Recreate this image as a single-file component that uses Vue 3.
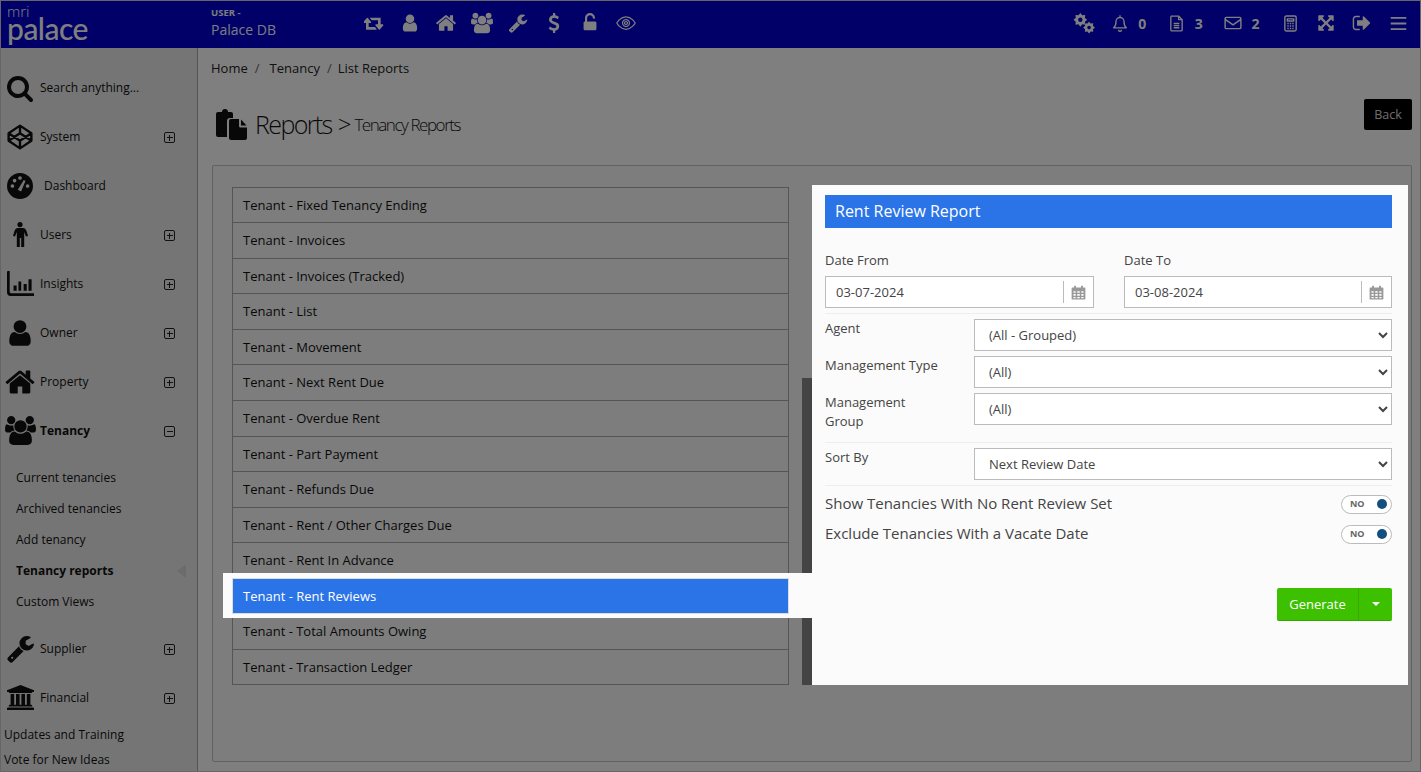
<script setup>
const circle = (cx, cy, r) => `M${cx - r} ${cy}a${r} ${r} 0 1 0 ${r * 2} 0a${r} ${r} 0 1 0 ${-r * 2} 0z`

// gear with a hole in the middle, used twice by the cogs icon
const gear = (cx, cy, r, hole) => {
  let d = ''
  for (let i = 0; i < 16; i++) {
    const a = (i / 16) * Math.PI * 2
    const rad = i % 2 === 0 ? r : r * 0.72
    d += `${i ? 'L' : 'M'}${(cx + rad * Math.cos(a)).toFixed(2)} ${(cy + rad * Math.sin(a)).toFixed(2)}`
  }
  return d + 'z' + circle(cx, cy, hole)
}

const icons = {
  search: { vb: '0 0 1792 1792', d: 'M1216 832q0-185-131.5-316.5t-316.5-131.5-316.5 131.5-131.5 316.5 131.5 316.5 316.5 131.5 316.5-131.5 131.5-316.5zm512 832q0 52-38 90t-90 38q-54 0-90-38l-343-342q-179 124-399 124-143 0-273.5-55.5t-225-150-150-225-55.5-273.5 55.5-273.5 150-225 225-150 273.5-55.5 273.5 55.5 225 150 150 225 55.5 273.5q0 220-124 399l343 343q37 37 37 90z' },
  user: { vb: '0 0 1792 1792', d: 'M1536 1399q0 109-62.5 187t-150.5 78h-854q-88 0-150.5-78t-62.5-187q0-85 8.5-160.5t31.5-152 58.5-131 94-89 134.5-34.5q131 128 313 128t313-128q76 0 134.5 34.5t94 89 58.5 131 31.5 152 8.5 160.5zm-256-887q0 159-112.5 271.5t-271.5 112.5-271.5-112.5-112.5-271.5 112.5-271.5 271.5-112.5 271.5 112.5 112.5 271.5z' },
  home: { vb: '0 0 1792 1792', d: 'M1472 992v480q0 26-19 45t-45 19h-384v-384h-256v384h-384q-26 0-45-19t-19-45v-480q0-1 .5-3t.5-3l575-474 575 474q1 2 1 6zm223-69l-62 74q-8 9-21 11h-3q-13 0-21-7l-692-577-692 577q-12 8-24 7-13-2-21-11l-62-74q-8-10-7-23.5t11-21.5l719-599q32-26 76-26t76 26l244 204v-195q0-14 9-23t23-9h192q14 0 23 9t9 23v408l219 182q10 8 11 21.5t-7 23.5z' },
  users: { vb: '0 0 1920 1792', d: 'M593 896q-162 5-265 128h-134q-82 0-138-40.5t-56-118.5q0-353 124-353 6 0 43.5 21t97.5 42.5 119 21.5q67 0 133-23-5 37-5 66 0 139 81 256zm1071 637q0 120-73 189.5t-194 69.5h-874q-121 0-194-69.5t-73-189.5q0-53 3.5-103.5t14-109 26.5-108.5 43-97.5 62-81 85.5-53.5 111.5-20q10 0 43 21.5t73 48 107 48 135 21.5 135-21.5 107-48 73-48 43-21.5q61 0 111.5 20t85.5 53.5 62 81 43 97.5 26.5 108.5 14 109 3.5 103.5zm-1024-1277q0 106-75 181t-181 75-181-75-75-181 75-181 181-75 181 75 75 181zm704 384q0 159-112.5 271.5t-271.5 112.5-271.5-112.5-112.5-271.5 112.5-271.5 271.5-112.5 271.5 112.5 112.5 271.5zm576 225q0 78-56 118.5t-138 40.5h-134q-103-123-265-128 81-117 81-256 0-29-5-66 66 23 133 23 59 0 119-21.5t97.5-42.5 43.5-21q124 0 124 353zm-128-609q0 106-75 181t-181 75-181-75-75-181 75-181 181-75 181 75 75 181z' },
  wrench: { vb: '0 0 1792 1792', d: 'M448 1472q0-26-19-45t-45-19-45 19-19 45 19 45 45 19 45-19 19-45zm644-420l-682 682q-37 37-90 37-52 0-91-37l-106-108q-38-36-38-90 0-53 38-91l681-681q39 98 114.5 173.5t173.5 114.5zm634-435q0 39-23 106-47 134-164.5 217.5t-258.5 83.5q-185 0-316.5-131.5t-131.5-316.5 131.5-316.5 316.5-131.5q58 0 121.5 16.5t107.5 46.5q16 11 16 28t-16 28l-293 169v224l193 107q5-3 79-48.5t135.5-81 70.5-35.5q15 0 23.5 10t8.5 25z' },
  dollar: { vb: '0 0 1792 1792', d: 'M1362 1185q0 153-99.5 263.5t-258.5 136.5v175q0 14-9 23t-23 9h-135q-13 0-22.5-9.5t-9.5-22.5v-175q-66-9-127.5-31t-101.5-44.5-74-48-46.5-37.5-17.5-18q-17-21-2-41l103-135q7-10 23-12 15-2 24 9l2 2q113 99 243 125 37 8 74 8 81 0 142.5-43t61.5-122q0-28-15-53t-33.5-42-58.5-37.5-66-32-80-32.5q-39-16-61.5-25t-61.5-26.5-62.5-31-56.5-35.5-53.5-42.5-43.5-49-35.5-58-21-66.5-8.5-78q0-138 98-242t255-134v-180q0-13 9.5-22.5t22.5-9.5h135q14 0 23 9t9 23v176q57 6 110.5 23t87 33.5 63.5 37.5 39 29 15 14q17 18 5 38l-81 146q-8 15-23 16-14 3-27-7-3-3-14.5-12t-39-26.5-58.5-32-74.5-26-85.5-11.5q-95 0-155 43t-60 111q0 26 8.5 48t29.5 41.5 39.5 33 56 31 60.5 27 70 27.5q53 20 81 31.5t76 35 75.5 42.5 62 50 53 63.5 31.5 76.5 13 94z' },
  unlock: { vb: '0 0 1792 1792', d: 'M1376 768q40 0 68 28t28 68v576q0 40-28 68t-68 28h-960q-40 0-68-28t-28-68v-576q0-40 28-68t68-28h32v-320q0-185 131.5-316.5t316.5-131.5 316.5 131.5 131.5 316.5q0 26-19 45t-45 19h-64q-26 0-45-19t-19-45q0-106-75-181t-181-75-181 75-75 181v320h736z' },
  retweet: { vb: '0 0 1920 1792', d: 'M1216 1504q0 13-9.5 22.5t-22.5 9.5h-960q-8 0-13.5-2t-9-7-5.5-8-3-11.5-1-11.5v-600h-192q-26 0-45-19t-19-45q0-24 15-41l320-384q19-22 49-22t49 22l320 384q15 17 15 41 0 26-19 45t-45 19h-192v384h576q16 0 25 11l160 192q7 10 7 21zm640-416q0 24-15 41l-320 384q-20 23-49 23t-49-23l-320-384q-15-17-15-41 0-26 19-45t45-19h192v-384h-576q-16 0-25-12l-160-192q-7-9-7-20 0-13 9.5-22.5t22.5-9.5h960q8 0 13.5 2t9 7 5.5 8 3 11.5 1 11.5v600h192q26 0 45 19t19 45z' },
  arrows: { vb: '0 0 1792 1792', d: 'M1411 541l-355 355 355 355 144-144q29-31 70-14 39 17 39 59v448q0 26-19 45t-45 19h-448q-42 0-59-40-17-39 14-69l144-144-355-355-355 355 144 144q31 30 14 69-17 40-59 40h-448q-26 0-45-19t-19-45v-448q0-42 40-59 39-17 69 14l144 144 355-355-355-355-144 144q-19 19-45 19-12 0-24-5-40-17-40-59v-448q0-26 19-45t45-19h448q42 0 59 40 17 39-14 69l-144 144 355 355 355-355-144-144q-31-30-14-69 17-40 59-40h448q26 0 45 19t19 45v448q0 42-39 59-13 5-25 5-26 0-45-19z' },
  signout: { vb: '0 0 1792 1792', d: 'M704 1440q0 4 1 20t.5 26.5-3 23.5-10 19.5-20.5 6.5h-320q-119 0-203.5-84.5t-84.5-203.5v-704q0-119 84.5-203.5t203.5-84.5h320q13 0 22.5 9.5t9.5 22.5q0 4 1 20t.5 26.5-3 23.5-10 19.5-20.5 6.5h-320q-66 0-113 47t-47 113v704q0 66 47 113t113 47h312l11.5 1 11.5 3 8 5.5 7 9 2 13.5zm928-544q0 26-19 45l-544 544q-19 19-45 19t-45-19-19-45v-288h-448q-26 0-45-19t-19-45v-384q0-26 19-45t45-19h448v-288q0-26 19-45t45-19 45 19l544 544q19 19 19 45z' },
  bars: { vb: '0 0 24 24', line: 2.6, d: 'M1 4h22M1 12h22M1 20h22' },
  male: { vb: '0 0 26 26', d: circle(13, 2.6, 2.6) + 'M10 6h6c2 0 3 1.5 3.5 3l1.5 5-2 .6-1.8-4.6V25h-3v-9h-1.4v9h-3V10l-1.8 4.6-2-.6 1.5-5c.5-1.5 1.500-3 3.500-3z' },
  bank: { vb: '0 0 1920 1792', d: 'M960 0l960 384v128h-128q0 26-20.5 45t-48.5 19h-1526q-28 0-48.5-19t-20.5-45h-128v-128zm-704 640h256v768h128v-768h256v768h128v-768h256v768h128v-768h256v768h59q28 0 48.5 19t20.5 45v64h-1664v-64q0-26 20.5-45t48.5-19h59v-768zm1595 960q28 0 48.5 19t20.5 45v128h-1920v-128q0-26 20.5-45t48.5-19h1782z' },
  cogs: { vb: '0 0 24 24', d: gear(8, 8.5, 7.5, 2.4) + gear(17.5, 17, 6.5, 2) },
  dashboard: { vb: '0 0 24 24', d: circle(12, 12, 12) + circle(5, 12, 1.7) + circle(7, 7, 1.7) + circle(12, 4.6, 1.7) + circle(19, 12, 1.7) + 'M10 15.5L15.5 6.5 17 7.3 13 17z' },
  chart: { vb: '0 0 26 24', d: 'M0 1q0-1 1-1h1.600v20q0 1.400 1.400 1.400H26V24H3.500Q0 24 0 20.500zM6.300 14h3v5h-3zM11 10h2.700v9H11zM16 12.500h3V19h-3zM20.700 8h3v11h-3z' },
  clip: { vb: '0 0 31 31', d: 'M2 3h4a3 3 0 0 1 6 0h3a2 2 0 0 1 2 2v4h-3a3 3 0 0 0-3 3v16H2a2 2 0 0 1-2-2V5a2 2 0 0 1 2-2zM15 10h8v7a1.5 1.5 0 0 0 1.5 1.5H31V29a2 2 0 0 1-2 2H15a2 2 0 0 1-2-2V12a2 2 0 0 1 2-2zM25 10.5l5.5 6H25z' },
  calendar: { vb: '0 0 24 24', d: 'M5 1h3v3h8V1h3v3h3a1 1 0 0 1 1 1v17a1 1 0 0 1-1 1H2a1 1 0 0 1-1-1V5a1 1 0 0 1 1-1h3zM4 10v2.500h3.500V10zm6 0v2.500h4V10zm6.500 0v2.500H20V10zM4 14.500V17h3.500v-2.500zm6 0V17h4v-2.500zm6.500 0V17H20v-2.500zM4 19v2h3.500v-2zm6 0v2h4v-2zm6.500 0v2H20v-2z' },
  // outlined ones are stroked instead of filled
  codepen: { vb: '0 0 24 24', line: 2.2, d: 'M12 1.5l10.5 7v7L12 22.500 1.500 15.500v-7zM12 22.500v-7M22.500 8.500l-10.500 7-10.500-7M1.500 15.500l10.500-7 10.500 7M12 1.500v7' },
  bell: { vb: '0 0 24 24', line: 1.8, d: 'M3.500 18.500c1.800-1.500 3.200-3.500 3.200-8.500a5.300 5.300 0 0 1 10.600 0c0 5 1.400 7 3.200 8.500zM10 21a2 2 0 0 0 4 0M12 1.500v3' },
  file: { vb: '0 0 24 24', line: 1.9, d: 'M6 1.500h9l5 5V21a1.500 1.500 0 0 1-1.500 1.500h-13A1.500 1.500 0 0 1 4 21V3a1.500 1.500 0 0 1 2-1.500zM15 1.500v5h5M8 12h8M8 15h8M8 18h8' },
  envelope: { vb: '0 0 24 24', line: 1.9, d: 'M3 4.500h18a1.500 1.500 0 0 1 1.500 1.500v12a1.500 1.500 0 0 1-1.500 1.500H3A1.500 1.500 0 0 1 1.500 18V6A1.500 1.500 0 0 1 3 4.500zM2 7.500l10 7 10-7' },
  calculator: { vb: '0 0 24 24', line: 2, d: 'M6 1.500h12a2 2 0 0 1 2 2v17a2 2 0 0 1-2 2H6a2 2 0 0 1-2-2v-17a2 2 0 0 1 2-2zM7.500 5.500h9v3h-9zM7.500 12h2M11 12h2M14.500 12h2M7.500 15.500h2M11 15.500h2M14.500 15.500h2M7.500 19h2M11 19h2M14.500 19h2' },
  eye: { vb: '0 0 24 24', line: 1.5, d: 'M1 12s4-7.500 11-7.500S23 12 23 12s-4 7.500-11 7.500S1 12 1 12zM12 7.800a4.200 4.200 0 1 0 .01 0zM12 10.200a1.800 1.800 0 1 0 .01 0' },
}

const leftTools = [
  { icon: 'retweet', size: 20 },
  { icon: 'user', size: 20 },
  { icon: 'home', size: 22 },
  { icon: 'users', size: 22 },
  { icon: 'wrench', size: 20 },
  { icon: 'dollar', size: 20 },
  { icon: 'unlock', size: 20 },
  { icon: 'eye', size: 20 },
]

const rightTools = [
  { icon: 'cogs', size: 22 },
  { icon: 'bell', size: 18, count: 0 },
  { icon: 'file', size: 17, count: 3 },
  { icon: 'envelope', size: 18, count: 2 },
  { icon: 'calculator', size: 17 },
  { icon: 'arrows', size: 18 },
  { icon: 'signout', size: 20 },
  { icon: 'bars', size: 17 },
]

const navTop = [
  { label: 'System', icon: 'codepen', size: 26, toggle: 'plus' },
  { label: 'Dashboard', icon: 'dashboard', size: 26, wide: true },
  { label: 'Users', icon: 'male', size: 26, toggle: 'plus' },
  { label: 'Insights', icon: 'chart', size: 27, toggle: 'plus' },
  { label: 'Owner', icon: 'user', size: 30, toggle: 'plus' },
  { label: 'Property', icon: 'home', size: 32, toggle: 'plus' },
  { label: 'Tenancy', icon: 'users', size: 31, toggle: 'minus', open: true },
]

const subNav = ['Current tenancies', 'Archived tenancies', 'Add tenancy', 'Tenancy reports', 'Custom Views']

const navBottom = [
  { label: 'Supplier', icon: 'wrench', size: 29, toggle: 'plus' },
  { label: 'Financial', icon: 'bank', size: 27, toggle: 'plus' },
]

const reports = [
  'Tenant - Fixed Tenancy Ending',
  'Tenant - Invoices',
  'Tenant - Invoices (Tracked)',
  'Tenant - List',
  'Tenant - Movement',
  'Tenant - Next Rent Due',
  'Tenant - Overdue Rent',
  'Tenant - Part Payment',
  'Tenant - Refunds Due',
  'Tenant - Rent / Other Charges Due',
  'Tenant - Rent In Advance',
  'Tenant - Rent Reviews',
  'Tenant - Total Amounts Owing',
  'Tenant - Transaction Ledger',
]
const activeReport = 'Tenant - Rent Reviews'

const filters = [
  { label: 'Agent', value: '(All - Grouped)' },
  { label: 'Management Type', value: '(All)' },
  { label: 'Management Group', value: '(All)' },
]
</script>

<template>
  <div class="page">
    <header class="topbar">
      <div class="logo">
        <span class="logo-mri">mri</span>
        <span class="logo-name">palace</span>
      </div>
      <div class="user">
        <span class="user-role">USER -</span>
        <span class="user-db">Palace DB</span>
      </div>
      <div class="tools">
        <span v-for="t in leftTools" :key="t.icon" class="tool">
          <svg :width="t.size" :height="t.size" :viewBox="icons[t.icon].vb" class="ico" :class="{ line: icons[t.icon].line }" :stroke-width="icons[t.icon].line">
            <path :d="icons[t.icon].d" />
          </svg>
        </span>
      </div>
      <div class="tools tools-right">
        <template v-for="t in rightTools" :key="t.icon">
          <span class="tool">
            <svg :width="t.size" :height="t.size" :viewBox="icons[t.icon].vb" class="ico" :class="{ line: icons[t.icon].line }" :stroke-width="icons[t.icon].line">
              <path :d="icons[t.icon].d" />
            </svg>
          </span>
          <span v-if="t.count !== undefined" class="count">{{ t.count }}</span>
        </template>
      </div>
    </header>

    <div class="body">
      <aside class="sidebar">
        <div class="nav-item nav-search">
          <span class="nav-icon">
            <svg width="28" height="28" :viewBox="icons.search.vb" class="ico"><path :d="icons.search.d" /></svg>
          </span>
          <span class="nav-label">Search anything...</span>
        </div>

        <div v-for="n in navTop" :key="n.label" class="nav-item">
          <span class="nav-icon">
            <svg :width="n.size" :height="n.size" :viewBox="icons[n.icon].vb" class="ico" :class="{ line: icons[n.icon].line }" :stroke-width="icons[n.icon].line">
              <path :d="icons[n.icon].d" />
            </svg>
          </span>
          <span class="nav-label" :class="{ bold: n.open, shifted: n.wide }">{{ n.label }}</span>
          <span v-if="n.toggle" class="toggle-box" :class="n.toggle"></span>
        </div>

        <ul class="subnav">
          <li v-for="s in subNav" :key="s" :class="{ current: s === 'Tenancy reports' }">{{ s }}</li>
        </ul>

        <div v-for="n in navBottom" :key="n.label" class="nav-item">
          <span class="nav-icon">
            <svg :width="n.size" :height="n.size" :viewBox="icons[n.icon].vb" class="ico"><path :d="icons[n.icon].d" /></svg>
          </span>
          <span class="nav-label">{{ n.label }}</span>
          <span class="toggle-box plus"></span>
        </div>

        <div class="nav-link">Updates and Training</div>
        <div class="nav-link">Vote for New Ideas</div>
      </aside>

      <main class="main">
        <nav class="crumbs">
          <span>Home</span><i>/</i><span>Tenancy</span><i>/</i><span>List Reports</span>
        </nav>

        <div class="title-row">
          <h1 class="title">
            <svg width="31" height="31" :viewBox="icons.clip.vb" class="ico"><path :d="icons.clip.d" /></svg>
            <span class="title-main">Reports</span>
            <span class="title-gt">&gt;</span>
            <span class="title-sub">Tenancy Reports</span>
          </h1>
          <button class="back-btn">Back</button>
        </div>

        <section class="card">
          <ul class="report-list">
            <li v-for="r in reports" :key="r" class="report-row" :class="{ spot: r === activeReport }">
              <a class="report-link" :class="{ active: r === activeReport }">{{ r }}</a>
            </li>
          </ul>

          <div class="side">
            <div class="side-bar"></div>
            <form class="panel" @submit.prevent>
              <h2 class="panel-head">Rent Review Report</h2>

              <div class="dates">
                <label class="date-field">
                  <span class="field-label">Date From</span>
                  <span class="date-box">
                    <input class="date-input" value="03-07-2024" />
                    <span class="date-btn">
                      <svg width="15" height="15" :viewBox="icons.calendar.vb"><path :d="icons.calendar.d" fill-rule="evenodd" /></svg>
                    </span>
                  </span>
                </label>
                <label class="date-field">
                  <span class="field-label">Date To</span>
                  <span class="date-box">
                    <input class="date-input" value="03-08-2024" />
                    <span class="date-btn">
                      <svg width="15" height="15" :viewBox="icons.calendar.vb"><path :d="icons.calendar.d" fill-rule="evenodd" /></svg>
                    </span>
                  </span>
                </label>
              </div>

              <hr class="rule" />

              <div v-for="f in filters" :key="f.label" class="filter-row">
                <span class="filter-label">{{ f.label }}</span>
                <select class="filter-select"><option>{{ f.value }}</option></select>
              </div>

              <hr class="rule rule-wide" />

              <div class="filter-row">
                <span class="filter-label">Sort By</span>
                <select class="filter-select"><option>Next Review Date</option></select>
              </div>

              <hr class="rule" />

              <div class="switch-row">
                <span>Show Tenancies With No Rent Review Set</span>
                <span class="switch">NO<b></b></span>
              </div>
              <div class="switch-row">
                <span>Exclude Tenancies With a Vacate Date</span>
                <span class="switch">NO<b></b></span>
              </div>

              <div class="actions">
                <div class="split-btn">
                  <button class="split-main">Generate</button>
                  <button class="split-caret" aria-label="More"><i></i></button>
                </div>
              </div>
            </form>
          </div>
        </section>
      </main>
    </div>

    <div class="dim"></div>
  </div>
</template>

<style>
html,
body {
  margin: 0;
  background: #fff;
}
</style>

<style scoped>
.page {
  position: relative;
  display: flex;
  flex-direction: column;
  box-sizing: border-box;
  width: 1421px;
  height: 772px;
  overflow: hidden;
  border: 1px solid #666;
  font-family: "Open Sans", "Liberation Sans", sans-serif;
  font-size: 13px;
  line-height: 1.42857;
  color: #222;
  background: #fff;
}

/* everything except the spotlit bits sits below this */
.dim {
  position: absolute;
  inset: 0;
  z-index: 10;
  background: rgba(0, 0, 0, 0.5);
}

.ico {
  display: block;
  fill: currentColor;
  fill-rule: evenodd;
}

.ico.line {
  fill: none;
  stroke: currentColor;
  stroke-linecap: butt;
  stroke-linejoin: round;
}

/* top bar */
.topbar {
  display: flex;
  align-items: center;
  flex: none;
  height: 47px;
  padding-right: 4px;
  background: #0000d0;
  color: #fff;
}

.logo {
  display: flex;
  flex-direction: column;
  flex: none;
  box-sizing: border-box;
  width: 210px;
  margin-top: -2px;
  padding-left: 6px;
  color: #fff;
}

.logo-mri {
  height: 9px;
  font-size: 15px;
  font-weight: 300;
  line-height: 9px;
}

.logo-name {
  font-family: Lato, "Open Sans", sans-serif;
  font-size: 30px;
  font-weight: 500;
  line-height: 25px;
  letter-spacing: -0.5px;
}

.user {
  display: flex;
  flex-direction: column;
  flex: none;
  width: 145px;
  margin-top: -4px;
  color: #f4f8ff;
}

.user-role {
  font-size: 9.5px;
  font-weight: 700;
  line-height: 14px;
}

.user-db {
  font-size: 14px;
  line-height: 19px;
}

.tools {
  display: flex;
  align-items: center;
  margin-top: -3px;
}

.tools-right {
  margin-left: auto;
}

.tool {
  display: flex;
  align-items: center;
  justify-content: center;
  width: 36px;
}

.count {
  width: 20.6px;
  margin-top: 2px;
  font-size: 14px;
  font-weight: 700;
}

/* sidebar */
.body {
  display: flex;
  flex: 1;
  min-height: 0;
}

.sidebar {
  flex: none;
  box-sizing: border-box;
  width: 197px;
  padding-top: 15px;
  border-right: 1px solid #aaa;
  background: #ebebeb;
  color: #111;
}

.nav-item {
  display: flex;
  align-items: center;
  height: 49px;
}

.nav-icon {
  display: flex;
  align-items: center;
  justify-content: center;
  flex: none;
  box-sizing: border-box;
  width: 39px;
  padding-right: 1px;
}

.nav-label {
  font-size: 12px;
}

.nav-label.bold {
  font-weight: 700;
}

.nav-label.shifted {
  margin-left: 4px;
}

.toggle-box {
  position: relative;
  box-sizing: border-box;
  width: 11px;
  height: 11px;
  margin: 2px 22px 0 auto;
  border: 1px solid #222;
  border-radius: 2px;
}

.toggle-box::before,
.plus::after {
  content: "";
  position: absolute;
  background: #222;
}

.toggle-box::before {
  left: 1.5px;
  right: 1.5px;
  top: 3.75px;
  height: 1.5px;
}

.plus::after {
  top: 1.5px;
  bottom: 1.5px;
  left: 3.75px;
  width: 1.5px;
}

.subnav {
  margin: 0;
  padding: 7px 0;
  list-style: none;
}

.subnav li {
  position: relative;
  height: 31px;
  padding-left: 15px;
  font-size: 12px;
  line-height: 31px;
}

.subnav li.current {
  font-weight: 700;
}

.subnav li.current::after {
  content: "";
  position: absolute;
  top: 9px;
  right: 11px;
  border: 7px solid transparent;
  border-left-width: 0;
  border-right: 9px solid #d8d8d8;
}

.nav-link {
  height: 25px;
  padding-left: 3px;
  font-size: 12px;
  line-height: 25px;
}

/* main */
.main {
  flex: 1;
  min-width: 0;
  padding: 0 8px 0 14px;
}

.crumbs {
  display: flex;
  height: 40px;
  align-items: center;
  margin-left: -1px;
  color: #222;
}

.crumbs i {
  margin: 0 10px 0 7px;
  font-style: normal;
  color: #666;
}

.crumbs i:last-of-type {
  margin-right: 6px;
}

.title-row {
  display: flex;
  align-items: flex-start;
  justify-content: space-between;
  height: 77px;
}

.title {
  display: flex;
  align-items: center;
  margin: 19px 0 0 4px;
  font-weight: 300;
  color: #111;
}

.title-main {
  margin-left: 8px;
  font-size: 25px;
  letter-spacing: -1.6px;
  line-height: 34px;
}

.title-gt {
  margin-left: 6px;
  font-size: 24px;
  line-height: 34px;
}

.title-sub {
  margin-left: 3px;
  padding-top: 3px;
  font-size: 17px;
  letter-spacing: -1.45px;
}

.back-btn {
  width: 48px;
  height: 31px;
  margin-top: 11px;
  padding: 0;
  border: 0;
  border-radius: 2px;
  background: #000;
  color: #ddd;
  font: inherit;
  font-size: 12.5px;
}

.card {
  display: flex;
  box-sizing: border-box;
  height: 597px;
  padding: 19px 3px 0 19px;
  border: 1px solid #c4c4c4;
  border-radius: 2px;
  background: #fbfbfb;
}

.report-list {
  flex: none;
  width: 557px;
  margin: 1.6px 0 0;
  padding: 0;
  list-style: none;
}

.report-row {
  margin-bottom: -1px;
}

.report-link {
  display: block;
  padding: 8px 10px;
  border: 1px solid #aaa;
  color: #111;
}

.report-row.spot {
  position: relative;
  z-index: 20;
}

.report-row.spot::before {
  content: "";
  position: absolute;
  z-index: -1;
  top: -5px;
  bottom: -4px;
  left: -9px;
  right: -24px;
  background: #fbfbfb;
}

.report-link.active {
  border-color: #ddd;
  background: #2b74e8;
  color: #fff;
}

.side {
  display: flex;
  height: 500px;
  margin-left: 13px;
}

.side-bar {
  flex: none;
  align-self: flex-end;
  width: 10px;
  height: 307px;
  background: #888;
}

/* spotlit form */
.panel {
  position: relative;
  z-index: 20;
  box-sizing: border-box;
  width: 596px;
  padding: 10px 16px 0 13px;
  background: #fbfbfb;
  color: #444;
}

.panel-head {
  margin: 0 0 22px;
  padding: 0 10px;
  height: 33px;
  background: #2b74e8;
  color: #fff;
  font-size: 16px;
  font-weight: 400;
  line-height: 33px;
}

.dates {
  display: flex;
  justify-content: space-between;
}

.date-field {
  display: flex;
  flex-direction: column;
}

.date-field:first-child {
  width: 269px;
}

.date-field:last-child {
  width: 268px;
}

.field-label {
  height: 20px;
  margin-bottom: 6px;
  line-height: 20px;
}

.date-box {
  display: flex;
  align-items: center;
  box-sizing: border-box;
  height: 32px;
  border: 1px solid #bbb;
  background: #fff;
}

.date-input {
  flex: 1;
  min-width: 0;
  height: 22px;
  padding: 0 10px;
  border: 0;
  border-right: 1px solid #bbb;
  outline: none;
  font: inherit;
  color: #444;
}

.date-btn {
  display: flex;
  justify-content: center;
  flex: none;
  width: 29px;
  color: #999;
}

.date-btn path {
  fill: currentColor;
}

.rule {
  height: 1px;
  margin: 5px 0;
  border: 0;
  background: #eee;
}

.rule-wide {
  margin-top: 11px;
}

.filter-row {
  display: flex;
  margin-bottom: 5px;
}

.filter-label {
  flex: none;
  box-sizing: border-box;
  width: 149px;
  padding-right: 30px;
  line-height: 19px;
}

.filter-select {
  flex: 1;
  min-width: 0;
  height: 32px;
  padding: 0 10px;
  border: 1px solid #bbb;
  border-radius: 0;
  background: #fff;
  color: #444;
  font: inherit;
}

.switch-row {
  display: flex;
  align-items: center;
  justify-content: space-between;
  height: 30px;
  font-size: 15px;
}

.rule + .switch-row {
  margin-top: -2px;
}

.switch {
  display: flex;
  align-items: center;
  justify-content: space-between;
  box-sizing: border-box;
  width: 51px;
  height: 19px;
  padding: 0 4px 0 8px;
  border: 1px solid #bbb;
  border-radius: 10px;
  background: #fff;
  color: #666;
  font-size: 9px;
  font-weight: 700;
}

.switch b {
  width: 10px;
  height: 10px;
  border-radius: 50%;
  background: #13507f;
}

.actions {
  display: flex;
  justify-content: flex-end;
  margin-top: 39px;
}

.split-btn {
  display: flex;
  height: 32px;
  border-radius: 2px;
  border-bottom: 1px solid #34a800;
  background: #3cc000;
}

.split-btn button {
  border: 0;
  background: none;
  color: #fff;
  font: inherit;
}

.split-main {
  width: 82px;
  padding: 0;
  border-right: 1px solid #36ad00 !important;
}

.split-caret {
  display: flex;
  align-items: center;
  justify-content: center;
  width: 33px;
  padding: 0;
}

.split-caret i {
  border: 4px solid transparent;
  border-top-color: #fff;
  border-bottom-width: 0;
}
</style>
